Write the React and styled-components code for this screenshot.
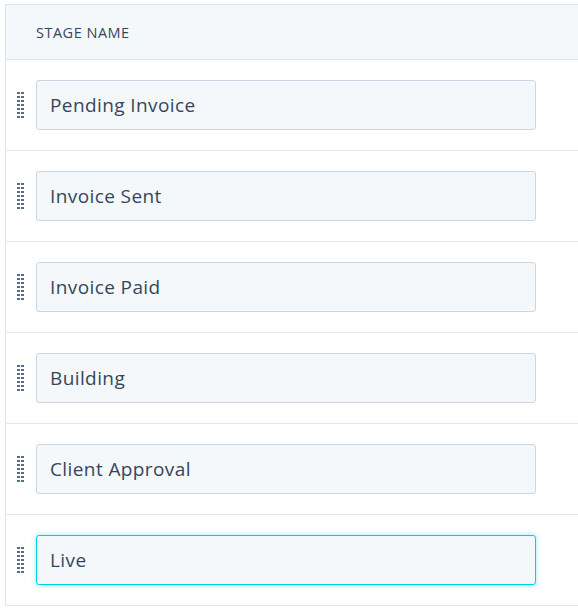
import styled, { createGlobalStyle } from "styled-components";

const Global = createGlobalStyle`
  body {
    margin: 0;
    background: #fff;
    font-family: "Open Sans", "Noto Sans", sans-serif;
    color: #33475b;
  }
`;

const Table = styled.div`
  margin: 4px 0 0 5px;
  border-top: 1px solid #dfe3eb;
  border-left: 1px solid #dfe3eb;
  width: 600px;
`;

const Header = styled.div`
  height: 54px;
  display: flex;
  align-items: center;
  padding-left: 30px;
  background: #f5f8fa;
  border-bottom: 1px solid #dfe3eb;
  font-size: 14.5px;
  font-weight: 500;
  letter-spacing: 0.5px;
  color: #33475b;
`;

const Row = styled.div`
  height: 90px;
  display: flex;
  align-items: center;
  padding-left: 11px;
  border-bottom: 1px solid #e5e8ef;
`;

const Handle = styled.div`
  display: grid;
  grid-template-columns: repeat(2, 3px);
  grid-auto-rows: 2px;
  column-gap: 1px;
  row-gap: 2px;
  margin-right: 12px;
`;

const Dot = styled.span`
  background: #516f90;
`;

const Input = styled.div`
  box-sizing: border-box;
  width: 500px;
  height: 50px;
  display: flex;
  align-items: center;
  padding-left: 13px;
  background: #f5f8fa;
  border: 1px solid ${(p) => (p.focused ? "#00d0e4" : "#cbd6e2")};
  box-shadow: ${(p) => (p.focused ? "0 0 4px 1px rgba(0,208,228,0.3)" : "none")};
  border-radius: 3px;
  font-size: 19px;
  font-weight: 400;
  letter-spacing: 0.4px;
  color: #33475b;
`;

const stages = [
  "Pending Invoice",
  "Invoice Sent",
  "Invoice Paid",
  "Building",
  "Client Approval",
  "Live",
];

const DragHandle = () => (
  <Handle>
    {Array.from({ length: 14 }).map((_, i) => (
      <Dot key={i} />
    ))}
  </Handle>
);

export default function App() {
  return (
    <>
      <Global />
      <Table>
        <Header>STAGE NAME</Header>
        {stages.map((s, i) => (
          <Row key={s}>
            <DragHandle />
            <Input focused={i === stages.length - 1}>{s}</Input>
          </Row>
        ))}
      </Table>
    </>
  );
}
